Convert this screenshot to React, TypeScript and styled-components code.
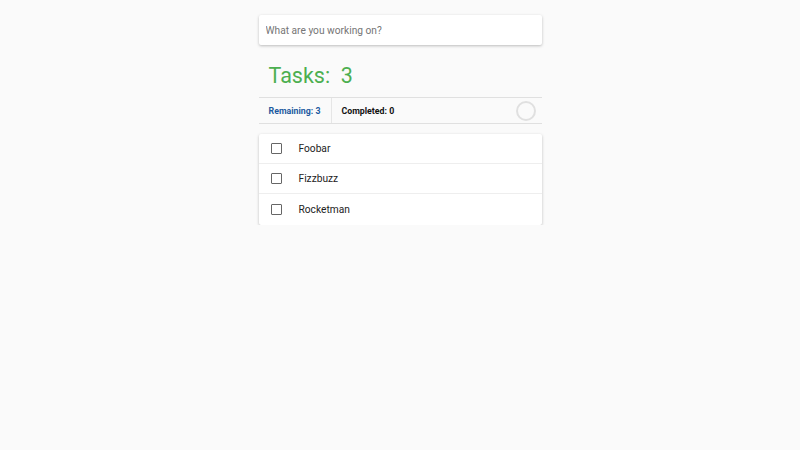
import styled, { createGlobalStyle } from 'styled-components';

const GlobalStyle = createGlobalStyle`
  html, body {
    margin: 0;
    padding: 0;
    background: #fafafa;
    font-family: Roboto, "Liberation Sans", sans-serif;
  }
`;

const Page = styled.div`
  width: 283px;
  margin: 0 auto;
  padding-top: 15px;
`;

const InputCard = styled.div`
  background: #fff;
  height: 30px;
  box-shadow: 0 1px 3px rgba(0, 0, 0, 0.25);
  border-radius: 2px;
  display: flex;
  align-items: center;
`;

const TaskInput = styled.input`
  border: none;
  outline: none;
  background: transparent;
  width: 100%;
  padding: 0 7px;
  font-family: inherit;
  font-size: 10.2px;
  color: #333;

  &::placeholder {
    color: #757575;
  }
`;

const Heading = styled.h1`
  margin: 0;
  padding: 18px 10px 0;
  height: 31px;
  font-size: 21.5px;
  font-weight: 400;
  color: #4caf50;
  white-space: pre;
`;

const StatsBar = styled.div`
  display: flex;
  align-items: center;
  height: 25px;
  margin-top: 3px;
  border-top: 1px solid #e0e0e0;
  border-bottom: 1px solid #e0e0e0;
`;

const Stat = styled.div<{ $active?: boolean; $last?: boolean }>`
  display: flex;
  align-items: center;
  height: 100%;
  padding: 0 10px;
  font-size: 8.8px;
  font-weight: 700;
  color: ${(p) => (p.$active ? '#1e5aa0' : '#111')};
  border-right: ${(p) => (p.$last ? 'none' : '1px solid #e6e6e6')};
  flex: ${(p) => (p.$last ? 1 : 'none')};
`;

const Ring = styled.div`
  width: 16px;
  height: 16px;
  border: 2px solid #e0e0e0;
  border-radius: 50%;
  margin-right: 6px;
`;

const ListCard = styled.ul`
  list-style: none;
  margin: 10px 0 0;
  padding: 0;
  background: #fff;
  box-shadow: 0 1px 3px rgba(0, 0, 0, 0.25);
  border-radius: 2px;
`;

const TaskRow = styled.li`
  box-sizing: border-box;
  display: flex;
  align-items: center;
  height: 30px;
  padding: 0 12px;
  border-bottom: 1px solid #eeeeee;
  font-size: 10.2px;
  color: #222;

  &:last-child {
    border-bottom: none;
    height: 31px;
  }
`;

const CheckBox = styled.span`
  width: 9px;
  height: 9px;
  border: 1.5px solid #666;
  border-radius: 1px;
  margin-right: 17px;
  flex: none;
`;

const tasks = ['Foobar', 'Fizzbuzz', 'Rocketman'];

function App() {
  return (
    <>
      <GlobalStyle />
      <Page>
        <InputCard>
          <TaskInput placeholder="What are you working on?" />
        </InputCard>
        <Heading>{`Tasks:  ${tasks.length}`}</Heading>
        <StatsBar>
          <Stat $active>Remaining: {tasks.length}</Stat>
          <Stat $last>Completed: 0</Stat>
          <Ring />
        </StatsBar>
        <ListCard>
          {tasks.map((t) => (
            <TaskRow key={t}>
              <CheckBox />
              {t}
            </TaskRow>
          ))}
        </ListCard>
      </Page>
    </>
  );
}

export default App;
